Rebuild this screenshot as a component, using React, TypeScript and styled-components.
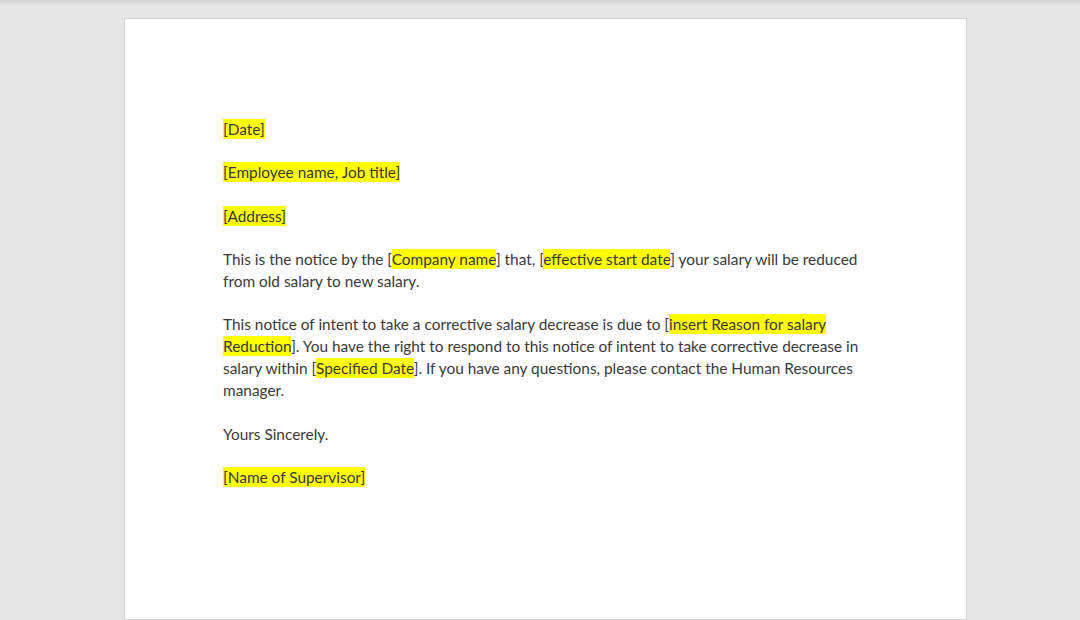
import styled, { createGlobalStyle } from 'styled-components'

const Global = createGlobalStyle`
  html, body { margin: 0; padding: 0; }
  body {
    background: #e6e6e6;
    font-family: Lato, "Open Sans", sans-serif;
    overflow: hidden;
  }
`

function App() {
  return (
    <>
      <Global />
      <Shell>
        <TopShade />
        <Page>
          <Para><Mark>[Date]</Mark></Para>
          <Para><Mark>[Employee name, Job title]</Mark></Para>
          <Para><Mark>[Address]</Mark></Para>
          <Para>
            This is the notice by the [<Mark>Company name</Mark>] that, [<Mark>effective start date</Mark>] your salary will be reduced from old salary to new salary.
          </Para>
          <Para>
            This notice of intent to take a corrective salary decrease is due to [<Mark>insert Reason for salary Reduction</Mark>]. You have the right to respond to this notice of intent to take corrective decrease in salary within [<Mark>Specified Date</Mark>]. If you have any questions, please contact the Human Resources manager.
          </Para>
          <Para>Yours Sincerely.</Para>
          <Para><Mark>[Name of Supervisor]</Mark></Para>
        </Page>
      </Shell>
    </>
  )
}

export default App

const Shell = styled.div`
  width: 1080px;
  height: 620px;
  display: flex;
  flex-direction: column;
  align-items: flex-start;
`

const TopShade = styled.div`
  width: 100%;
  height: 6px;
  margin-bottom: 12px;
  background: linear-gradient(#d2d2d2, #e6e6e6);
`

const Page = styled.div`
  margin-left: 124px;
  width: 843px;
  height: 620px;
  box-sizing: border-box;
  background: #fff;
  border: 1px solid #d4d4d4;
  padding: 99px 100px 0 98px;
`

const Para = styled.p`
  margin: 0 0 21.4px;
  font-size: 15.4px;
  line-height: 22px;
  color: #3a3a3a;
`

const Mark = styled.span`
  background: #ffff00;
  padding: 1px 0;
`
